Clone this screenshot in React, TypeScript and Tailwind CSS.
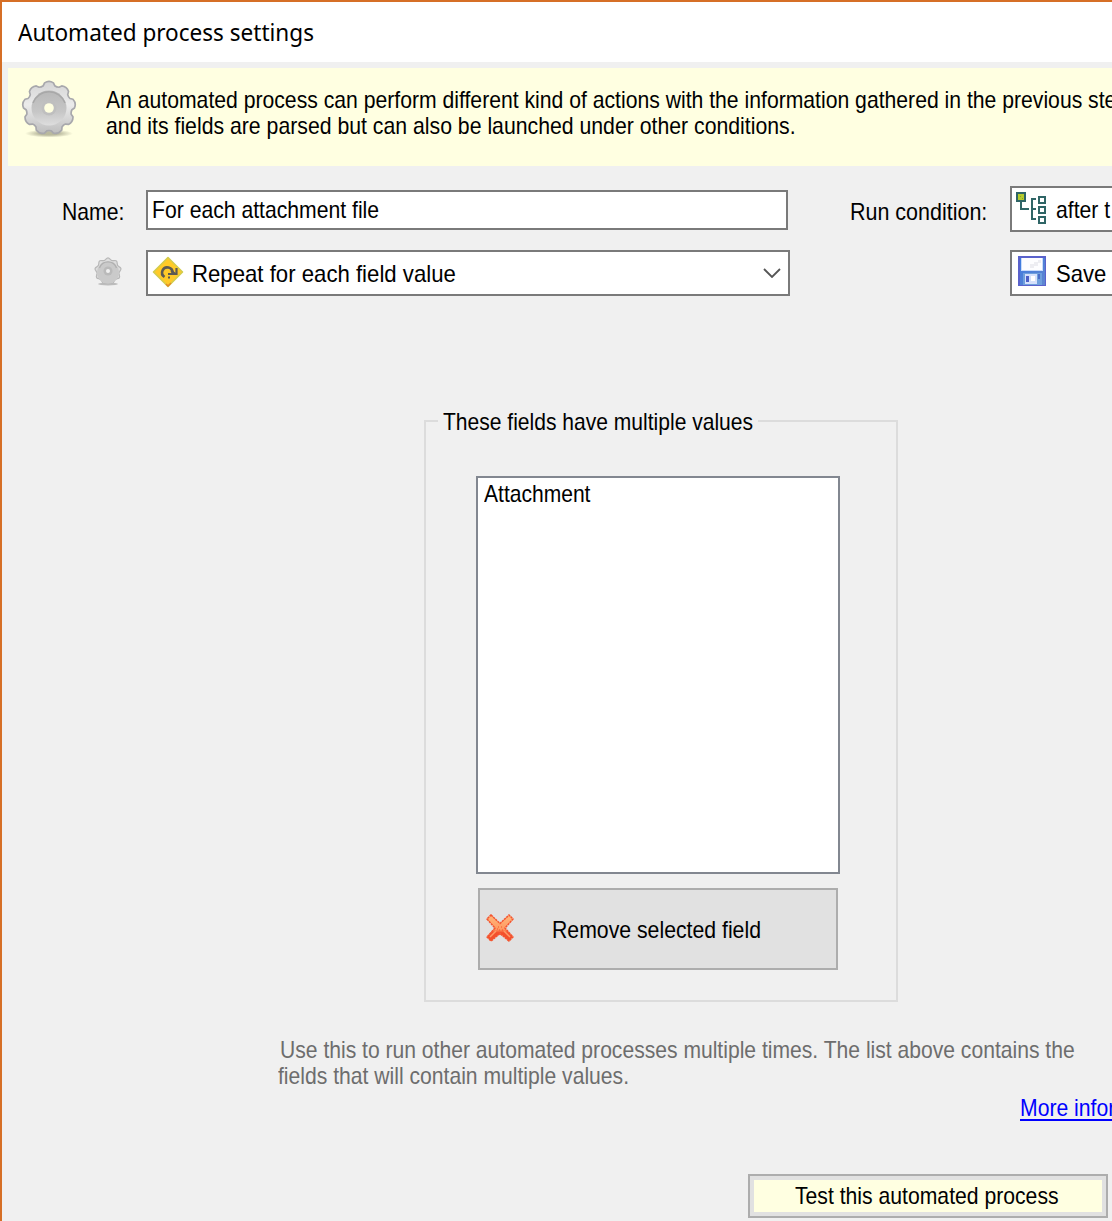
import type { ReactNode } from "react";

/** Condensed interface text, one line each. */
function Label({
  children,
  className = "",
  scale = "scale-x-[0.882]",
}: {
  children: ReactNode;
  className?: string;
  scale?: string;
}) {
  return (
    <span
      className={`block w-max origin-left ${scale} font-['Liberation_Sans',Arial,sans-serif] text-[24px] leading-[26px] whitespace-pre ${className}`}
    >
      {children}
    </span>
  );
}

function gearPath(cx: number, cy: number, outer: number, inner: number, teeth: number) {
  const pts: string[] = [];
  const step = (Math.PI * 2) / teeth;
  const at = (r: number, a: number) =>
    `${(cx + r * Math.sin(a)).toFixed(2)} ${(cy - r * Math.cos(a)).toFixed(2)}`;
  for (let i = 0; i < teeth; i++) {
    const a = i * step;
    pts.push(`${i ? "L" : "M"}${at(inner, a - step * 0.36)}`);
    pts.push(`L${at(outer - 1.5, a - step * 0.25)}`);
    pts.push(`Q${at(outer + 1, a)} ${at(outer - 1.5, a + step * 0.25)}`);
    pts.push(`L${at(inner, a + step * 0.36)}`);
    pts.push(`Q${at(inner - 0.8, a + step * 0.5)} ${at(inner, a + step * 0.64)}`);
  }
  return pts.join("") + "Z";
}

function GearIcon({ className }: { className: string }) {
  return (
    <svg viewBox="0 0 56 60" className={className} aria-hidden="true">
      <defs>
        <linearGradient id="gear-body" x1="0" y1="0" x2="0" y2="1">
          <stop offset="0" stopColor="#d4d4d4" />
          <stop offset="0.45" stopColor="#ebebeb" />
          <stop offset="1" stopColor="#bebebe" />
        </linearGradient>
        <linearGradient id="gear-disc" x1="0" y1="0" x2="0" y2="1">
          <stop offset="0" stopColor="#b8b8b8" />
          <stop offset="0.6" stopColor="#c6c6c6" />
          <stop offset="1" stopColor="#dedede" />
        </linearGradient>
        <radialGradient id="gear-shadow">
          <stop offset="0.4" stopColor="#8b8b70" stopOpacity="0.6" />
          <stop offset="1" stopColor="#8b8b70" stopOpacity="0" />
        </radialGradient>
      </defs>
      <ellipse cx="28" cy="53.5" rx="24" ry="4" fill="url(#gear-shadow)" />
      <path
        d={gearPath(28, 28, 27, 23, 9)}
        fill="url(#gear-body)"
        stroke="#a8a8ac"
        strokeWidth="1.7"
        strokeLinejoin="round"
      />
      <circle cx="28" cy="28" r="17.5" fill="url(#gear-disc)" />
      <path d="M12 23a17 17 0 0 1 32 0" fill="none" stroke="#a8a8a8" strokeWidth="1.5" />
      <circle cx="28" cy="28" r="7.5" fill="#bfbfbf" />
      <circle cx="28" cy="28" r="4.8" fill="#ffffe1" />
    </svg>
  );
}

function SmallGearIcon({ className }: { className: string }) {
  return (
    <svg viewBox="0 0 28 30" className={className} aria-hidden="true">
      <ellipse cx="14" cy="27" rx="10" ry="1.5" fill="#bcbcbc" />
      <path d={gearPath(14, 14, 13.5, 11.5, 9)} fill="#dedede" stroke="#b8b8b8" strokeWidth="1.2" />
      <circle cx="14" cy="15.5" r="11" fill="#cacaca" />
      <path d="M5.5 11a9 9 0 0 1 17 0" fill="none" stroke="#b0b0b0" strokeWidth="1.3" />
      <circle cx="14" cy="14" r="4.5" fill="#bababa" />
      <circle cx="14" cy="14" r="2" fill="#f0f0f0" />
    </svg>
  );
}

function RepeatIcon() {
  return (
    <svg viewBox="0 0 32 32" className="h-8 w-8 shrink-0" aria-hidden="true">
      <path d="M16 1.5 30.5 16 16 30.5 1.5 16Z" fill="#ffca28" stroke="#d3cb4c" strokeWidth="1.6" strokeLinejoin="round" />
      <path d="M14 28l2 2 3-3" fill="none" stroke="#e28a2a" strokeWidth="1.5" />
      <path d="M12.500 21A5.200 5.200 0 1 1 20.500 17" fill="none" stroke="#5d5a52" strokeWidth="2.6" />
      <path d="M16 21.500h2" stroke="#5d5a52" strokeWidth="2.2" />
      <path d="M16 18h8.500v-6" fill="none" stroke="#5d5a52" strokeWidth="2.2" />
      <path d="M19 14.500l4.500 3.500" stroke="#5d5a52" strokeWidth="2" />
    </svg>
  );
}

function TreeIcon() {
  return (
    <svg viewBox="0 0 32 34" className="h-[34px] w-8 shrink-0" shapeRendering="crispEdges" fill="none" stroke="#2f6566" strokeWidth="2" aria-hidden="true">
      <rect x="1" y="1" width="8" height="8" fill="#b5cc2e" />
      <path d="M5 10v7h8M20 7h-4v20h4M16 17h4" />
      <rect x="23" y="5" width="6" height="6" fill="#fff" />
      <rect x="23" y="15" width="6" height="6" fill="#fff" />
      <rect x="23" y="25" width="6" height="6" fill="#fff" />
      <path d="M4 4h1M6 6h1" stroke="#8aa028" strokeWidth="1" />
    </svg>
  );
}

function SaveIcon() {
  return (
    <svg viewBox="0 0 28 30" className="h-[30px] w-7 shrink-0" shapeRendering="crispEdges" aria-hidden="true">
      <defs>
        <linearGradient id="floppy" x1="0" y1="0" x2="1" y2="1">
          <stop offset="0" stopColor="#3e7be0" />
          <stop offset="1" stopColor="#5f86d0" />
        </linearGradient>
      </defs>
      <rect width="28" height="30" fill="#5a62cc" />
      <rect x="1.5" y="1.5" width="25" height="27" fill="url(#floppy)" />
      <rect x="3" y="2" width="22" height="13" fill="#c9dcfb" />
      <rect x="4" y="2" width="20" height="12" fill="#fdfdff" />
      <path d="M12 8h4V6h4V4h3v3h-3v3h-4v2h-4z" fill="#ededf2" />
      <rect x="5" y="17" width="19" height="12" fill="#6fa0dc" />
      <rect x="7" y="18" width="12" height="10" fill="#d5e1fb" />
      <rect x="13" y="20" width="4" height="5" fill="#fff" />
      <rect x="8" y="20" width="3" height="6" fill="#4c5fc6" />
      <rect x="20" y="18" width="2" height="5" fill="#4a6dc8" />
    </svg>
  );
}

function RemoveIcon() {
  return (
    <svg viewBox="0 0 28 28" className="-mt-0.5 h-7 w-7 shrink-0" aria-hidden="true">
      <defs>
        <linearGradient id="cross" x1="0" y1="0" x2="0" y2="1">
          <stop offset="0" stopColor="#ffb87c" />
          <stop offset="0.55" stopColor="#ff9a62" />
          <stop offset="0.68" stopColor="#f4502c" />
          <stop offset="1" stopColor="#f2522e" />
        </linearGradient>
      </defs>
      <path
        d="M5 1 14 9.5 23 1 27 5 19 14 27 23 23 27 14 19.500 5 27 1 23 9 14 1 5Z"
        fill="url(#cross)"
        stroke="#f4552f"
        strokeWidth="1.5"
        strokeDasharray="2.4 0.6"
      />
      <path d="M4 23 10 17M24 23l-6-6" stroke="#ff9a66" strokeWidth="1.5" />
      <path d="M12 13h1M15 13h1M13 16h1M16 16h1M11 15h1" stroke="#f4552f" strokeWidth="1.2" />
    </svg>
  );
}

export default function App() {
  return (
    <div className="flex h-[1221px] w-[1112px] flex-col overflow-hidden border-t-2 border-l-2 border-[#d66f26] bg-[#f0f0f0] text-black">
      <header className="flex h-[60px] shrink-0 items-center bg-white pl-4">
        <h1 className="origin-left scale-x-[0.98] font-['Noto_Sans','Open_Sans',sans-serif] text-[23px] leading-8 whitespace-nowrap">
          Automated process settings
        </h1>
      </header>

      <section className="mt-1.5 ml-1.5 flex h-[98px] shrink-0 bg-[#ffffe1] pl-[13px]">
        <GearIcon className="mt-3 h-[60px] w-14 shrink-0" />
        <div className="ml-[29px] pt-[19px]">
          <Label>An automated process can perform different kind of actions with the information gathered in the previous ste</Label>
          <Label scale="scale-x-[0.885]">and its fields are parsed but can also be launched under other conditions.</Label>
        </div>
      </section>

      <form className="mt-5 grid shrink-0 grid-cols-[144px_644px_220px_300px] grid-rows-[46px_46px] gap-y-[18px]">
        <Label className="mt-[13px] ml-[60px]">Name:</Label>
        <div className="mt-1 h-10 w-[642px] border-2 border-[#7a7a7a] bg-white pt-[5px] pl-1">
          <Label>For each attachment file</Label>
        </div>
        <Label className="mt-[13px] ml-[60px]" scale="scale-x-[0.895]">Run condition:</Label>
        <div className="flex border-2 border-[#7a7a7a] bg-white pt-1 pl-1">
          <TreeIcon />
          <Label className="mt-[5px] ml-2">after t</Label>
        </div>

        <SmallGearIcon className="mt-[7px] ml-[92px] h-[30px] w-7" />
        <div className="flex border-2 border-[#7a7a7a] bg-white pl-1">
          <div className="pt-1">
            <RepeatIcon />
          </div>
          <Label className="mt-[9px] ml-2" scale="scale-x-[0.924]">Repeat for each field value</Label>
          <svg viewBox="0 0 18 10" className="mt-4 mr-[7px] ml-auto h-2.5 w-[18px]" fill="none" stroke="#555" strokeWidth="1.8" aria-hidden="true">
            <path d="M1 1l8 8 8-8" />
          </svg>
        </div>
        <div />
        <div className="flex border-2 border-[#7a7a7a] bg-white pt-1 pl-1.5">
          <SaveIcon />
          <Label className="mt-[5px] ml-2.5" scale="scale-x-[0.92]">Save</Label>
        </div>
      </form>

      <fieldset className="relative mt-[124px] ml-[422px] h-[582px] w-[474px] shrink-0 border-2 border-[#dcdcdc] pt-[54px] pl-[50px]">
        <div className="absolute -top-[13px] left-3 h-[26px] w-[320px] bg-[#f0f0f0] pl-[5px]">
          <Label scale="scale-x-[0.877]">These fields have multiple values</Label>
        </div>
        <div className="h-[398px] w-[364px] border-2 border-[#828790] bg-white pt-[3px] pl-1.5">
          <Label scale="scale-x-[0.877]">Attachment</Label>
        </div>
        <button type="button" className="mt-3.5 ml-0.5 flex h-[82px] w-[360px] items-center border-2 border-[#adadad] bg-[#e1e1e1] pl-1.5">
          <RemoveIcon />
          <Label className="mt-0.5 ml-[38px]" scale="scale-x-[0.885]">Remove selected field</Label>
        </button>
      </fieldset>

      <div className="mt-[35px] ml-[276px] shrink-0 text-[#6d6d6d]">
        <Label className="ml-[2px]" scale="scale-x-[0.879]">Use this to run other automated processes multiple times. The list above contains the</Label>
        <Label scale="scale-x-[0.88]">fields that will contain multiple values.</Label>
      </div>

      <a href="#more" className="mt-[6px] ml-[1018px] h-[26px] w-40 shrink-0 border-b-2 border-[#0000ff] text-[#0000ff]">
        <Label>More infor</Label>
      </a>

      <button type="button" className="mt-[53px] ml-[746px] h-11 w-[360px] shrink-0 border-2 border-[#adadad] bg-[#e1e1e1] p-1">
        <span className="flex h-8 items-start bg-[#ffffe1] pt-[3px] pl-[41px]">
          <Label>Test this automated process</Label>
        </span>
      </button>
    </div>
  );
}
